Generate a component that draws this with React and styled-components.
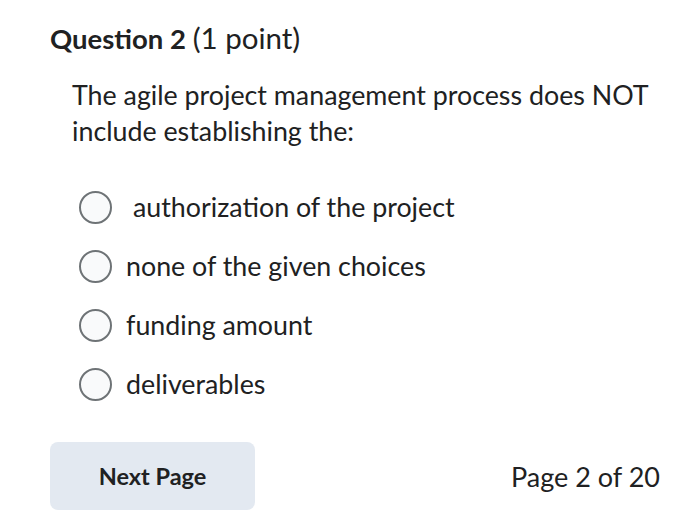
import React from "react";
import styled, { createGlobalStyle } from "styled-components";

const Global = createGlobalStyle`
  html, body { margin: 0; padding: 0; background: #fff; }
  body { font-family: Lato, "Open Sans", sans-serif; color: #202122; }
`;

const Page = styled.div`
  width: 700px;
  height: 517px;
  box-sizing: border-box;
  padding: 21px 40px 0 50px;
  display: flex;
  flex-direction: column;
`;

const Title = styled.h2`
  margin: 0;
  font-size: 27.5px;
  font-weight: 700;
  line-height: 34px;
  color: #202122;
  span { font-weight: 400; font-size: 29.5px; }
`;

const Prompt = styled.p`
  margin: 21px 0 0 22px;
  font-size: 26.8px;
  line-height: 36px;
  color: #202122;
`;

const Options = styled.div`
  margin: 41px 0 0 29px;
  display: flex;
  flex-direction: column;
  gap: 25px;
`;

const Option = styled.label`
  display: flex;
  align-items: center;
  gap: ${p => p.$gap}px;
  font-size: 26.8px;
  height: 34px;
`;

const Radio = styled.span`
  width: 29px;
  height: 29px;
  border-radius: 50%;
  border: 2px solid #6e7376;
  background: #f9fafb;
  flex: none;
`;

const Footer = styled.div`
  margin-top: 41px;
  display: flex;
  align-items: center;
  justify-content: space-between;
`;

const Button = styled.button`
  width: 205px;
  height: 68px;
  border: none;
  border-radius: 8px;
  background: #e3e9f1;
  font-family: Lato, sans-serif;
  font-weight: 700;
  font-size: 23.5px;
  color: #202122;
`;

const PageInfo = styled.div`
  font-size: 27px;
  color: #202122;
`;

const options = [
  ["authorization of the project", 21],
  ["none of the given choices", 14],
  ["funding amount", 14],
  ["deliverables", 14],
];

export default function App() {
  return (
    <>
      <Global />
      <Page>
        <Title>Question 2 <span>(1 point)</span></Title>
        <Prompt>
          The agile project management process does NOT
          <br />
          include establishing the:
        </Prompt>
        <Options>
          {options.map(([t, g]) => (
            <Option key={t} $gap={g}>
              <Radio />
              {t}
            </Option>
          ))}
        </Options>
        <Footer>
          <Button>Next Page</Button>
          <PageInfo>Page 2 of 20</PageInfo>
        </Footer>
      </Page>
    </>
  );
}
